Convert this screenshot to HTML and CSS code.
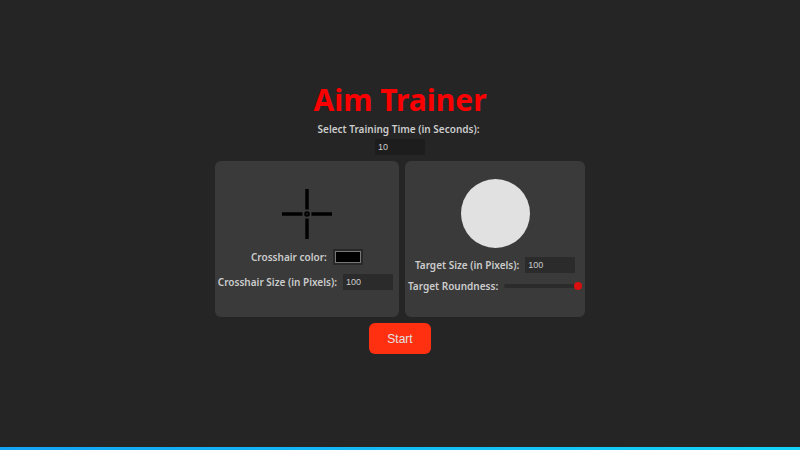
FILE: index.html
```html
<!DOCTYPE html>
<html lang="en">
<head>
<meta charset="utf-8">
<meta name="viewport" content="width=device-width, initial-scale=1">
<title>Aim Trainer</title>
<link rel="stylesheet" href="styles.css">
</head>
<body>
<main class="menu">
  <h1 class="title">Aim Trainer</h1>
  <label class="time-label" for="time">Select Training Time (in Seconds):</label>
  <input class="field field-time" id="time" type="text" inputmode="numeric" value="10">
  <div class="panels">
    <section class="panel">
      <svg class="crosshair" viewBox="0 0 50 50" aria-hidden="true">
        <path d="M25 0V20.5M25 29.5V50M0 25H20.5M29.5 25H50" stroke="#000" stroke-width="3.4" fill="none"/>
        <circle cx="25" cy="25" r="1.8" stroke="#000" stroke-width="2" fill="#3a3a3a"/>
      </svg>
      <div class="row row-color">
        <label for="color">Crosshair color:</label>
        <input class="swatch" id="color" type="color" value="#000000">
      </div>
      <div class="row row-size">
        <label for="csize">Crosshair Size (in Pixels):</label>
        <input class="field" id="csize" type="text" inputmode="numeric" value="100">
      </div>
    </section>
    <section class="panel">
      <div class="target"></div>
      <div class="row row-target">
        <label for="tsize">Target Size (in Pixels):</label>
        <input class="field" id="tsize" type="text" inputmode="numeric" value="100">
      </div>
      <div class="row row-round">
        <label for="round">Target Roundness:</label>
        <input class="slider" id="round" type="range" min="0" max="50" value="50">
      </div>
    </section>
  </div>
  <button class="start" type="button">Start</button>
</main>
<div class="timebar"></div>
</body>
</html>
```
FILE: styles.css
```css
* {
  box-sizing: border-box;
}

body {
  margin: 0;
  min-height: 100vh;
  display: flex;
  flex-direction: column;
  background: #252525;
  color: #ccc;
  font: 600 10px/16px "Noto Sans", "Open Sans", sans-serif;
}

.menu {
  flex: 1;
  display: flex;
  flex-direction: column;
  align-items: center;
  justify-content: center;
  padding-bottom: 12px;
}

.title {
  margin: 0 0 2px;
  color: #fa0000;
  font-size: 30px;
  font-weight: 700;
  line-height: 38px;
}

.time-label {
  padding-right: 3px;
}

.field {
  width: 50px;
  height: 16px;
  padding: 0 3px;
  border: 0;
  background: #2b2b2b;
  color: #ccc;
  font: 9px "Liberation Sans", sans-serif;
}

.field-time {
  margin-top: 2px;
  background: #1d1d1d;
}

.panels {
  display: flex;
  gap: 6px;
  margin: 6px 0;
}

.panel {
  display: flex;
  flex-direction: column;
  align-items: center;
  min-height: 156px;
  padding: 18px 3px;
  border-radius: 6px;
  background: #3a3a3a;
}

.row {
  display: flex;
  align-items: center;
  gap: 6px;
}

.crosshair {
  width: 50px;
  height: 50px;
  margin-top: 10px;
}

.row-color {
  margin-top: 10px;
}

.row-size {
  margin-top: 9px;
  padding-right: 3px;
}

.swatch {
  width: 30px;
  height: 16px;
  padding: 0;
  border: 2px solid #282828;
  background: #282828;
}

.swatch::-webkit-color-swatch-wrapper {
  padding: 0;
}

.swatch::-webkit-color-swatch {
  border: 1px solid #777;
  border-radius: 0;
}

.target {
  width: 69px;
  height: 69px;
  border-radius: 50%;
  background: #e1e1e1;
}

.row-target {
  margin-top: 9px;
}

.row-round {
  margin-top: 5px;
}

.slider {
  appearance: none;
  width: 78px;
  height: 4px;
  margin: 0;
  border-radius: 2px;
  background: #2b2b2b;
}

.slider::-webkit-slider-thumb {
  appearance: none;
  width: 8px;
  height: 8px;
  border-radius: 50%;
  background: #d81010;
}

.start {
  width: 62px;
  height: 31px;
  padding: 0;
  border: 0;
  border-radius: 6px;
  background: #ff3010;
  color: #e1e1e1;
  font: 12px "Liberation Sans", sans-serif;
}

.timebar {
  height: 3px;
  background: linear-gradient(to right, #14a4f4, #14d4f8);
}
```
